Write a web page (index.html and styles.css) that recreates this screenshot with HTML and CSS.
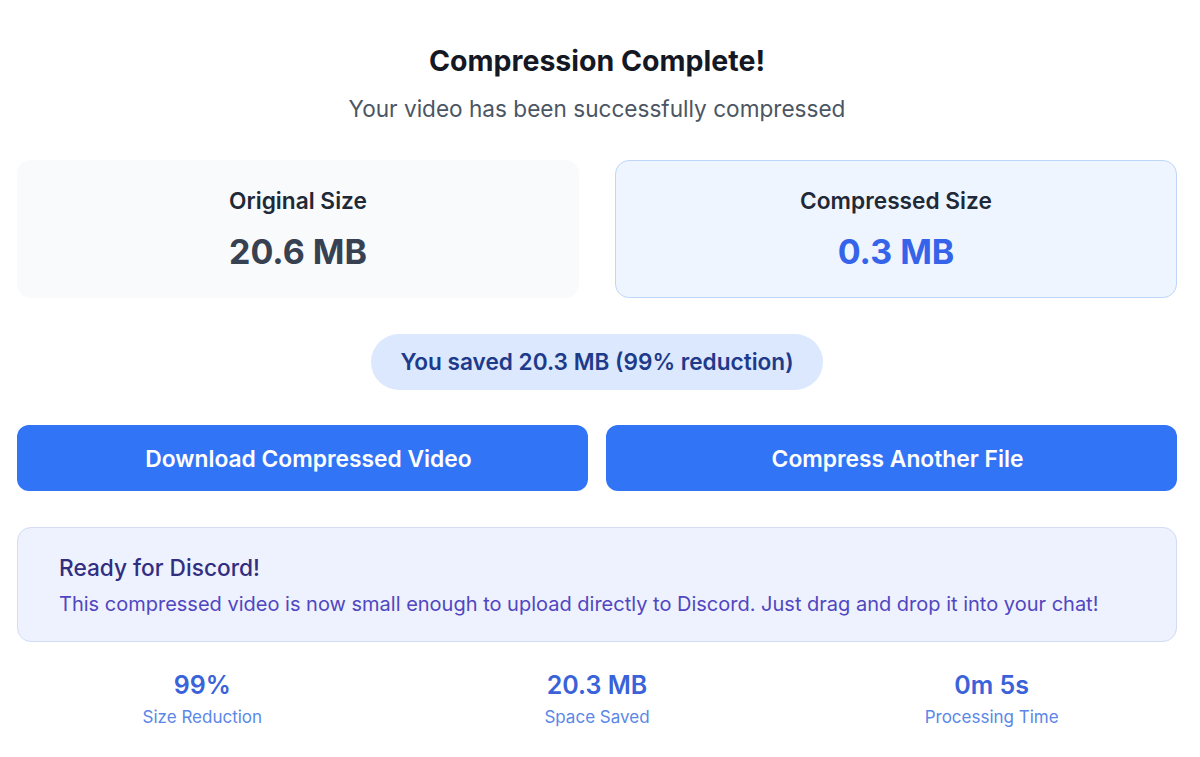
FILE: index.html
```html
<!DOCTYPE html>
<html lang="en">
<head>
    <meta charset="UTF-8">
    <title>Compression Complete</title>
    <link rel="stylesheet" href="styles.css">
</head>
<body>
    <div class="result">
        <!-- header -->
        <h1 class="title">Compression Complete!</h1>
        <p class="subtitle">Your video has been successfully compressed</p>

        <!-- size cards -->
        <div class="sizes">
            <div class="size-card original">
                <div class="size-label">Original Size</div>
                <div class="size-value">20.6 MB</div>
            </div>
            <div class="size-card compressed">
                <div class="size-label">Compressed Size</div>
                <div class="size-value">0.3 MB</div>
            </div>
        </div>

        <div class="saved-row">
            <div class="saved-pill">You saved 20.3 MB (99% reduction)</div>
        </div>

        <!-- actions -->
        <div class="actions">
            <button type="button" class="btn">Download Compressed Video</button>
            <button type="button" class="btn">Compress Another File</button>
        </div>

        <div class="discord">
            <h3>Ready for Discord!</h3>
            <p>This compressed video is now small enough to upload directly to Discord. Just drag and drop it into your chat!</p>
        </div>

        <!-- stats -->
        <div class="stats">
            <div class="stat">
                <div class="stat-value">99%</div>
                <div class="stat-label">Size Reduction</div>
            </div>
            <div class="stat">
                <div class="stat-value">20.3 MB</div>
                <div class="stat-label">Space Saved</div>
            </div>
            <div class="stat">
                <div class="stat-value">0m 5s</div>
                <div class="stat-label">Processing Time</div>
            </div>
        </div>
    </div>
</body>
</html>
```
FILE: styles.css
```css
body {
    font-family: Inter, "Noto Sans", Arial, sans-serif;
    margin: 0;
    background-color: #ffffff;
    color: #111827;
}
.result {
    padding: 0 23px 0 17px;
}
.title {
    margin: 0;
    padding-top: 43px;
    font-size: 28.5px;
    line-height: 35px;
    font-weight: 700;
    text-align: center;
    color: #141824;
}
.subtitle {
    margin: 16px 0 0;
    font-size: 22.6px;
    line-height: 30px;
    text-align: center;
    color: #4b5563;
}
.sizes {
    display: grid;
    grid-template-columns: 1fr 1fr;
    gap: 36px;
    margin-top: 36px;
}
.size-card {
    height: 138px;
    box-sizing: border-box;
    border-radius: 14px;
    display: flex;
    flex-direction: column;
    align-items: center;
    justify-content: center;
    gap: 15px;
}
.original {
    background-color: #f8fafc;
}
.compressed {
    background-color: #eff5ff;
    border: 1px solid #bfd6fb;
}
.size-label {
    font-size: 22.7px;
    line-height: 30px;
    font-weight: 600;
    color: #1f2937;
}
.size-value {
    font-size: 34px;
    line-height: 42px;
    font-weight: 700;
    color: #374151;
}
.compressed .size-value {
    color: #3563e9;
}
.saved-row {
    display: flex;
    justify-content: center;
    margin-top: 36px;
}
.saved-pill {
    height: 56px;
    line-height: 56px;
    padding: 0 29px;
    border-radius: 28px;
    background-color: #dbe8fd;
    color: #1e3a8a;
    font-size: 22.6px;
    font-weight: 600;
}
.actions {
    display: grid;
    grid-template-columns: 1fr 1fr;
    gap: 18px;
    margin-top: 35px;
}
.btn {
    height: 66px;
    padding: 0 0 0 12px;
    border: none;
    border-radius: 12px;
    background-color: #3274f6;
    color: #ffffff;
    font-family: inherit;
    font-size: 22.8px;
    font-weight: 600;
    cursor: pointer;
}
.btn:hover {
    background-color: #2563eb;
}
.discord {
    margin-top: 36px;
    height: 115px;
    box-sizing: border-box;
    padding: 25px 41px 0;
    border: 1px solid #d3dbf7;
    border-radius: 14px;
    background-color: #eef1fe;
}
.discord h3 {
    margin: 0;
    font-size: 22.7px;
    line-height: 30px;
    font-weight: 500;
    color: #312e81;
}
.discord p {
    margin: 7px 0 0;
    font-size: 20px;
    line-height: 28px;
    color: #5047c0;
}
.stats {
    display: grid;
    grid-template-columns: repeat(3, 1fr);
    margin: 27px -12px 0;
    text-align: center;
}
.stat-value {
    font-size: 25px;
    line-height: 33px;
    font-weight: 600;
    color: #3a62d9;
}
.stat-label {
    margin-top: 2px;
    font-size: 17px;
    line-height: 27px;
    color: #5a87e8;
}
```
